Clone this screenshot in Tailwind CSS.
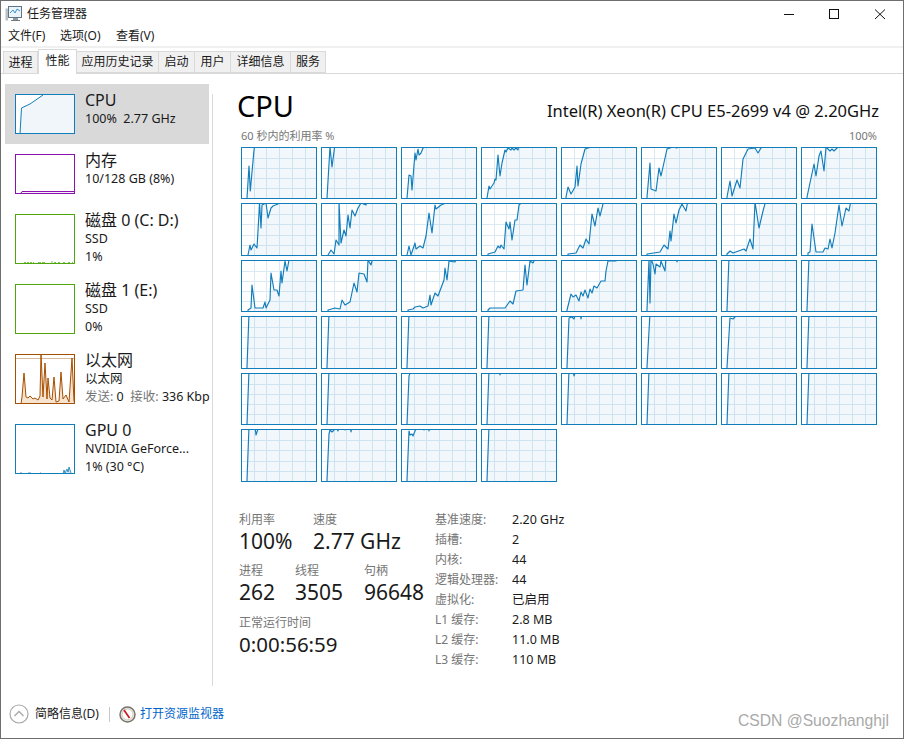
<!DOCTYPE html>
<html lang="zh">
<head>
<meta charset="utf-8">
<title>任务管理器</title>
<script src="https://cdn.jsdelivr.net/npm/@tailwindcss/browser@4"></script>
</head>
<body class="bg-white">
<svg class="hidden"><defs>
<g id="g1" fill="none" stroke="#d9eaf4" stroke-width="1"><path d="M13.5 0V60M25.5 0V60M38.5 0V60M51.5 0V60M64.5 0V60M0 11.5H75M0 21.5H75M0 31.5H75M0 41.5H75"/></g>
<g id="g2" fill="none" stroke="#d9eaf4" stroke-width="1"><path d="M13.5 0V60M25.5 0V60M38.5 0V60M51.5 0V60M64.5 0V60M0 11.5H75M0 21.5H75M0 32.5H75M0 42.5H75"/></g>
</defs></svg>
<div class="w-[904px] h-[739px] flex flex-col overflow-hidden border border-[#6e6e6e] bg-white text-[12px] text-[#1a1a1a] font-['Noto_Sans','Noto_Sans_CJK_SC',sans-serif]">

  <!-- title bar -->
  <div class="h-[25px] flex items-center shrink-0">
    <svg class="ml-[4px] w-[18px] h-[18px]" viewBox="0 0 18 18"><rect x="0.5" y="3.5" width="2.5" height="12" fill="#b9c0c6"/><rect x="3.5" y="1.5" width="13" height="11" fill="#eaf3fa" stroke="#5f7485"/><path d="M5 8 L8 5 L10 8 L12 4 L15 6" fill="none" stroke="#3f93c9"/><path d="M8 13h5v2H8z" fill="#8c979f"/><path d="M6 15.5h9" stroke="#6d7880"/></svg>
    <span class="ml-[4px] text-[12px]">任务管理器</span>
    <div class="ml-auto flex items-center">
      <svg class="w-[12px] h-[12px]" viewBox="0 0 12 12"><path d="M1 6.5H11" stroke="#111"/></svg>
      <svg class="ml-[33px] w-[12px] h-[12px]" viewBox="0 0 12 12"><rect x="1.5" y="1.5" width="9" height="9" fill="none" stroke="#111"/></svg>
      <svg class="ml-[34px] mr-[17px] w-[12px] h-[12px]" viewBox="0 0 12 12"><path d="M1 1.5L11 11M11 1.5L1 11" stroke="#111" stroke-width="1"/></svg>
    </div>
  </div>

  <!-- menu -->
  <div class="h-[20px] flex items-center shrink-0 pl-[7px] text-[12px]">
    <span class="w-[52px]">文件(F)</span><span class="w-[56px]">选项(O)</span><span>查看(V)</span>
  </div>
  <div class="h-[2px] bg-[#f0f0f0] shrink-0"></div>

  <!-- tabs -->
  <div class="h-[26px] flex items-end shrink-0 pl-[2px] border-b border-[#d9d9d9]">
    <div class="w-[35px] h-[22px] flex items-center justify-center bg-[#f0f0f0] border border-b-0 border-[#d9d9d9]">进程</div>
    <div class="w-[39px] h-[25px] flex items-start pt-[2px] justify-center bg-white border border-b-0 border-[#d9d9d9] -mb-px relative">性能</div>
    <div class="w-[82px] h-[22px] flex items-center justify-center bg-[#f0f0f0] border-y border-r border-[#d9d9d9]">应用历史记录</div>
    <div class="w-[36px] h-[22px] flex items-center justify-center bg-[#f0f0f0] border-y border-r border-[#d9d9d9]">启动</div>
    <div class="w-[36px] h-[22px] flex items-center justify-center bg-[#f0f0f0] border-y border-r border-[#d9d9d9]">用户</div>
    <div class="w-[60px] h-[22px] flex items-center justify-center bg-[#f0f0f0] border-y border-r border-[#d9d9d9]">详细信息</div>
    <div class="w-[35px] h-[22px] flex items-center justify-center bg-[#f0f0f0] border-y border-r border-[#d9d9d9]">服务</div>
  </div>

  <!-- body -->
  <div class="flex-1 flex min-h-0">
    <!-- sidebar -->
    <div class="w-[211px] shrink-0 pl-[4px] pt-[10px] overflow-hidden">
      <div class="w-[204px] h-[60px] bg-[#d9d9d9] flex pl-[10px] pt-[10px] gap-[10px]">
        <svg class="shrink-0 w-[60px] h-[40px] outline-1 -outline-offset-1 outline-[#117dbb] bg-white" viewBox="0 0 60 40"><path d="M5 40L6.500 14L15 10L28 1H60V40Z" fill="#f1f6fa"/><path d="M5 40L6.500 14L15 10L28 1" fill="none" stroke="#117dbb"/></svg>
        <div class="-mt-[4px] whitespace-nowrap">
          <div class="text-[16px] leading-[20px]">CPU</div>
          <div class="text-[12.500px] leading-[18px]">100%&nbsp; 2.77 GHz</div>
        </div>
      </div>
      <div class="w-[204px] h-[60px] flex pl-[10px] pt-[10px] gap-[10px]">
        <svg class="shrink-0 w-[60px] h-[40px] outline-1 -outline-offset-1 outline-[#8b12ae] bg-white" viewBox="0 0 60 40"><path d="M6 40L7 37H60V40Z" fill="#f4f2f4"/><path d="M6 39L7 37.500H60" fill="none" stroke="#8b12ae"/></svg>
        <div class="-mt-[4px] whitespace-nowrap">
          <div class="text-[16px] leading-[20px]">内存</div>
          <div class="text-[12.500px] leading-[18px]">10/128 GB (8%)</div>
        </div>
      </div>
      <div class="w-[204px] h-[70px] flex pl-[10px] pt-[10px] gap-[10px]">
        <svg class="shrink-0 w-[60px] h-[50px] outline-1 -outline-offset-1 outline-[#4da60c] bg-white" viewBox="0 0 60 50"><path d="M9 48.500h2M12 48.500h2M15 48.500h2M18 48.500h1M23 48.500h3M27 48.500h3M36 48h2M39 48.500h2M43 48.500h2M48 48.500h2M53 48.500h2M57 48.500h1" stroke="#4da60c" opacity=".7"/></svg>
        <div class="-mt-[4px] whitespace-nowrap">
          <div class="text-[16px] leading-[20px]">磁盘 0 (C: D:)</div>
          <div class="text-[12.500px] leading-[18px]">SSD</div>
          <div class="text-[12.500px] leading-[18px]">1%</div>
        </div>
      </div>
      <div class="w-[204px] h-[70px] flex pl-[10px] pt-[10px] gap-[10px]">
        <svg class="shrink-0 w-[60px] h-[50px] outline-1 -outline-offset-1 outline-[#4da60c] bg-white" viewBox="0 0 60 50"></svg>
        <div class="-mt-[4px] whitespace-nowrap">
          <div class="text-[16px] leading-[20px]">磁盘 1 (E:)</div>
          <div class="text-[12.500px] leading-[18px]">SSD</div>
          <div class="text-[12.500px] leading-[18px]">0%</div>
        </div>
      </div>
      <div class="w-[204px] h-[70px] flex pl-[10px] pt-[10px] gap-[10px]">
        <svg class="shrink-0 w-[60px] h-[50px] outline-1 -outline-offset-1 outline-[#a74f01] bg-white" viewBox="0 0 60 50"><path d="M0 4.500H60" stroke="#d9b99c"/><path d="M6 50L7 43L9 19L11 43L13 44L15 42L18 45L20 44L23 46L25 42L26 0L28 43L30 9L32 45L33 24L35 44L37 46L39 23L41 48L44 47L46 18L48 45L51 41L54 48L57 4L59 47L60 50Z" fill="#f6e3d0" stroke="#a74f01"/></svg>
        <div class="-mt-[4px] whitespace-nowrap">
          <div class="text-[16px] leading-[20px]">以太网</div>
          <div class="text-[12.500px] leading-[18px]">以太网</div>
          <div class="text-[12.500px] leading-[18px]"><span class="text-[#767676]">发送:</span> 0&nbsp; <span class="text-[#767676]">接收:</span> 336 Kbp</div>
        </div>
      </div>
      <div class="w-[204px] h-[70px] flex pl-[10px] pt-[10px] gap-[10px]">
        <svg class="shrink-0 w-[60px] h-[50px] outline-1 -outline-offset-1 outline-[#117dbb] bg-white" viewBox="0 0 60 50"><path d="M5 49h2M13 49h3M25 49h1M48 50L49 46L50 49L52 45L53 48L54 43L56 49L57 50Z" fill="#cfe3f0" stroke="#117dbb" stroke-width=".8"/></svg>
        <div class="-mt-[4px] whitespace-nowrap">
          <div class="text-[16px] leading-[20px]">GPU 0</div>
          <div class="text-[12.500px] leading-[18px]">NVIDIA GeForce...</div>
          <div class="text-[12.500px] leading-[18px]">1% (30 °C)</div>
        </div>
      </div>
    </div>

    <!-- divider -->
    <div class="w-px h-[592px] mt-[20px] bg-[#d9d9d9] shrink-0"></div>

    <!-- main panel -->
    <div class="flex-1 pl-[25px] pt-[14px] min-w-0">
      <div class="h-[36px] w-[641px] flex items-end justify-between">
        <div class="-ml-[1px] text-[29px] leading-[36px] text-black">CPU</div>
        <div class="text-[16.500px] leading-[24px] mb-[1px] text-[#111] whitespace-nowrap">Intel(R) Xeon(R) CPU E5-2699 v4 @ 2.20GHz</div>
      </div>
      <div class="w-[636px] ml-[3px] mt-[6px] h-[13px] flex justify-between items-center text-[11px] text-[#767676]"><span>60 秒内的利用率 %</span><span>100%</span></div>

      <div class="ml-[3px] mt-[4px] grid grid-cols-[repeat(8,76px)] grid-rows-[52px_53px_52px_53px_52px_53px] gap-[4px] w-[636px]">
<!-- row 1 -->
<svg class="size-full outline-1 -outline-offset-1 outline-[#117dbb] fill-[#117dbb]/6 stroke-[#117dbb] [stroke-width:1.15] [stroke-linejoin:round]"><use href="#g1"/><polygon points="6,60 6,51 8,19 9.300,44 13,3 14,-3 80,-3 80,60"/></svg>
<svg class="size-full outline-1 -outline-offset-1 outline-[#117dbb] fill-[#117dbb]/6 stroke-[#117dbb] [stroke-width:1.15] [stroke-linejoin:round]"><use href="#g1"/><polygon points="6,60 6,51 9,0 11,20 14,-3 80,-3 80,60"/></svg>
<svg class="size-full outline-1 -outline-offset-1 outline-[#117dbb] fill-[#117dbb]/6 stroke-[#117dbb] [stroke-width:1.15] [stroke-linejoin:round]"><use href="#g1"/><polygon points="6,60 6,51 8,28 10,29 11,43 14,6 15,13 17,2 18,8 20,6 22,1 25,0 27,-3 80,-3 80,60"/></svg>
<svg class="size-full outline-1 -outline-offset-1 outline-[#117dbb] fill-[#117dbb]/6 stroke-[#117dbb] [stroke-width:1.15] [stroke-linejoin:round]"><use href="#g1"/><polygon points="6,60 6,51 8,39 9,42 13,36 14,32 15,33 17,8 19,29 21,16 24,3 25,5 27,1 30,3 31,1 33,3 35,1 37,3 38,-3 80,-3 80,60"/></svg>
<svg class="size-full outline-1 -outline-offset-1 outline-[#117dbb] fill-[#117dbb]/6 stroke-[#117dbb] [stroke-width:1.15] [stroke-linejoin:round]"><use href="#g1"/><polygon points="5,60 5,50 7,40 10,47 14,40 16,19 17,39 20,17 24,2 27,1 31,0 33,-3 80,-3 80,60"/></svg>
<svg class="size-full outline-1 -outline-offset-1 outline-[#117dbb] fill-[#117dbb]/6 stroke-[#117dbb] [stroke-width:1.15] [stroke-linejoin:round]"><use href="#g1"/><polygon points="6,60 6,50 9,16 10,42 15,44 18,21 20,29 26,2 32,0 36,1 38,-3 80,-3 80,60"/></svg>
<svg class="size-full outline-1 -outline-offset-1 outline-[#117dbb] fill-[#117dbb]/6 stroke-[#117dbb] [stroke-width:1.15] [stroke-linejoin:round]"><use href="#g1"/><polygon points="6,60 6,50 9,34 11,49 16,33 19,41 22,12 27,2 34,1 37,6 40,1 41,0 43,-3 80,-3 80,60"/></svg>
<svg class="size-full outline-1 -outline-offset-1 outline-[#117dbb] fill-[#117dbb]/6 stroke-[#117dbb] [stroke-width:1.15] [stroke-linejoin:round]"><use href="#g1"/><polygon points="6,60 6,50 13,17 15,29 18,9 20,4 23,24 25,0 29,4 31,2 33,4 37,0 39,-3 80,-3 80,60"/></svg>
<!-- row 2 -->
<svg class="size-full outline-1 -outline-offset-1 outline-[#117dbb] fill-[#117dbb]/6 stroke-[#117dbb] [stroke-width:1.15] [stroke-linejoin:round]"><use href="#g2"/><polygon points="7,60 7,52 9,42 10,47 13,41 16,45 18,10 18.500,-1 20,25 21,2 25,0 27,15 30,5 32,3 37,1 38,-3 80,-3 80,60"/></svg>
<svg class="size-full outline-1 -outline-offset-1 outline-[#117dbb] fill-[#117dbb]/6 stroke-[#117dbb] [stroke-width:1.15] [stroke-linejoin:round]"><use href="#g2"/><polygon points="7,60 7,52 10,47 13,51 15,37 18,42 18,-1 20,40 23,27 25,33 27,12 29,25 31,7 34,13 37,5 40,0 45,2 46,-3 80,-3 80,60"/></svg>
<svg class="size-full outline-1 -outline-offset-1 outline-[#117dbb] fill-[#117dbb]/6 stroke-[#117dbb] [stroke-width:1.15] [stroke-linejoin:round]"><use href="#g2"/><polygon points="6,60 6,52 8,43 10,52 14,40 15,46 19,43 22,45 25,33 28,10 31,30 34,2 35,6 40,2 45,0 47,-3 80,-3 80,60"/></svg>
<svg class="size-full outline-1 -outline-offset-1 outline-[#117dbb] fill-[#117dbb]/6 stroke-[#117dbb] [stroke-width:1.15] [stroke-linejoin:round]"><use href="#g2"/><polygon points="7,60 7,51 14,49 17,43 19,45 20,42 23,46 25,19 28,26 29,19 31,37 34,17 36,17 38,2 40,0 42,-3 80,-3 80,60"/></svg>
<svg class="size-full outline-1 -outline-offset-1 outline-[#117dbb] fill-[#117dbb]/6 stroke-[#117dbb] [stroke-width:1.15] [stroke-linejoin:round]"><use href="#g2"/><polygon points="7,60 7,51 15,50 19,42 22,45 25,36 28,41 31,11 34,23 37,5 39,13 43,-3 80,-3 80,60"/></svg>
<svg class="size-full outline-1 -outline-offset-1 outline-[#117dbb] fill-[#117dbb]/6 stroke-[#117dbb] [stroke-width:1.15] [stroke-linejoin:round]"><use href="#g2"/><polygon points="6,60 6,51 19,49 23,42 27,46 29,28 30,38 33,11 35,20 38,7 41,1 45,8 47,-3 80,-3 80,60"/></svg>
<svg class="size-full outline-1 -outline-offset-1 outline-[#117dbb] fill-[#117dbb]/6 stroke-[#117dbb] [stroke-width:1.15] [stroke-linejoin:round]"><use href="#g2"/><polygon points="6,60 6,51 9,48 12,50 23,46 25,48 29,36 32,46 34,-1 38,25 42,8 45,-3 80,-3 80,60"/></svg>
<svg class="size-full outline-1 -outline-offset-1 outline-[#117dbb] fill-[#117dbb]/6 stroke-[#117dbb] [stroke-width:1.15] [stroke-linejoin:round]"><use href="#g2"/><polygon points="7,60 7,50 9,49 11,21 15,49 22,49 24,45 27,46 29,36 31,45 34,30 38,2 41,23 45,5 48,8 50,-3 80,-3 80,60"/></svg>
<!-- row 3 -->
<svg class="size-full outline-1 -outline-offset-1 outline-[#117dbb] fill-[#117dbb]/6 stroke-[#117dbb] [stroke-width:1.15] [stroke-linejoin:round]"><use href="#g1"/><polygon points="7,60 7,50 10,48 11,25 14,48 22,48 24,42 25,48 29,40 30,13 33,30 36,30 38,36 40,11 41,23 44,1 46,11 48,0 52,0 53,-3 80,-3 80,60"/></svg>
<svg class="size-full outline-1 -outline-offset-1 outline-[#117dbb] fill-[#117dbb]/6 stroke-[#117dbb] [stroke-width:1.15] [stroke-linejoin:round]"><use href="#g1"/><polygon points="7,60 7,50 14,48 19,49 21,40 24,45 29,42 33,23 36,32 38,13 43,14 46,22 47,0 50,5 52,-3 80,-3 80,60"/></svg>
<svg class="size-full outline-1 -outline-offset-1 outline-[#117dbb] fill-[#117dbb]/6 stroke-[#117dbb] [stroke-width:1.15] [stroke-linejoin:round]"><use href="#g1"/><polygon points="7,60 7,50 12,49 14,47 19,46 22,48 27,46 29,35 30,45 34,33 37,36 43,20 44,8 46,20 48,1 54,2 56,-3 80,-3 80,60"/></svg>
<svg class="size-full outline-1 -outline-offset-1 outline-[#117dbb] fill-[#117dbb]/6 stroke-[#117dbb] [stroke-width:1.15] [stroke-linejoin:round]"><use href="#g1"/><polygon points="7,60 7,50 9,48 16,48 24,48 29,41 32,44 35,31 42,30 44,5 46,25 49,1 52,3 55,-3 80,-3 80,60"/></svg>
<svg class="size-full outline-1 -outline-offset-1 outline-[#117dbb] fill-[#117dbb]/6 stroke-[#117dbb] [stroke-width:1.15] [stroke-linejoin:round]"><use href="#g1"/><polygon points="6,60 6,50 10,34 12,37 15,35 18,41 20,32 22,36 24,30 27,38 29,29 31,33 33,26 36,28 40,21 44,21 45,11 47,1 55,1 57,-3 80,-3 80,60"/></svg>
<svg class="size-full outline-1 -outline-offset-1 outline-[#117dbb] fill-[#117dbb]/6 stroke-[#117dbb] [stroke-width:1.15] [stroke-linejoin:round]"><use href="#g1"/><polygon points="6,60 6,50 8,-1 9,43 10,-1 12,4 14,14 15,4 19,7 20,1 24,11 25,-3 35,-3 36,2 37,-3 80,-3 80,60"/></svg>
<svg class="size-full outline-1 -outline-offset-1 outline-[#117dbb] fill-[#117dbb]/6 stroke-[#117dbb] [stroke-width:1.15] [stroke-linejoin:round]"><use href="#g1"/><polygon points="6,60 6,50 8,-3 80,-3 80,60"/></svg>
<svg class="size-full outline-1 -outline-offset-1 outline-[#117dbb] fill-[#117dbb]/6 stroke-[#117dbb] [stroke-width:1.15] [stroke-linejoin:round]"><use href="#g1"/><polygon points="6,60 6,50 8,-3 80,-3 80,60"/></svg>
<!-- row 4 -->
<svg class="size-full outline-1 -outline-offset-1 outline-[#117dbb] fill-[#117dbb]/6 stroke-[#117dbb] [stroke-width:1.15] [stroke-linejoin:round]"><use href="#g2"/><polygon points="6,60 6,51 8,-3 80,-3 80,60"/></svg>
<svg class="size-full outline-1 -outline-offset-1 outline-[#117dbb] fill-[#117dbb]/6 stroke-[#117dbb] [stroke-width:1.15] [stroke-linejoin:round]"><use href="#g2"/><polygon points="6,60 6,51 8,-3 80,-3 80,60"/></svg>
<svg class="size-full outline-1 -outline-offset-1 outline-[#117dbb] fill-[#117dbb]/6 stroke-[#117dbb] [stroke-width:1.15] [stroke-linejoin:round]"><use href="#g2"/><polygon points="6,60 6,51 8,-3 80,-3 80,60"/></svg>
<svg class="size-full outline-1 -outline-offset-1 outline-[#117dbb] fill-[#117dbb]/6 stroke-[#117dbb] [stroke-width:1.15] [stroke-linejoin:round]"><use href="#g2"/><polygon points="6,60 6,51 8,-3 80,-3 80,60"/></svg>
<svg class="size-full outline-1 -outline-offset-1 outline-[#117dbb] fill-[#117dbb]/6 stroke-[#117dbb] [stroke-width:1.15] [stroke-linejoin:round]"><use href="#g2"/><polygon points="6,60 6,51 8,2 11,1 13,3 15,-3 19,-3 20,3 21,-3 80,-3 80,60"/></svg>
<svg class="size-full outline-1 -outline-offset-1 outline-[#117dbb] fill-[#117dbb]/6 stroke-[#117dbb] [stroke-width:1.15] [stroke-linejoin:round]"><use href="#g2"/><polygon points="6,60 6,51 9,-3 80,-3 80,60"/></svg>
<svg class="size-full outline-1 -outline-offset-1 outline-[#117dbb] fill-[#117dbb]/6 stroke-[#117dbb] [stroke-width:1.15] [stroke-linejoin:round]"><use href="#g2"/><polygon points="6,60 6,51 9,2 12,3 14,1 16,-3 80,-3 80,60"/></svg>
<svg class="size-full outline-1 -outline-offset-1 outline-[#117dbb] fill-[#117dbb]/6 stroke-[#117dbb] [stroke-width:1.15] [stroke-linejoin:round]"><use href="#g2"/><polygon points="6,60 6,51 8,-3 80,-3 80,60"/></svg>
<!-- row 5 -->
<svg class="size-full outline-1 -outline-offset-1 outline-[#117dbb] fill-[#117dbb]/6 stroke-[#117dbb] [stroke-width:1.15] [stroke-linejoin:round]"><use href="#g1"/><polygon points="6,60 6,51 8,-3 80,-3 80,60"/></svg>
<svg class="size-full outline-1 -outline-offset-1 outline-[#117dbb] fill-[#117dbb]/6 stroke-[#117dbb] [stroke-width:1.15] [stroke-linejoin:round]"><use href="#g1"/><polygon points="6,60 6,51 8,-3 80,-3 80,60"/></svg>
<svg class="size-full outline-1 -outline-offset-1 outline-[#117dbb] fill-[#117dbb]/6 stroke-[#117dbb] [stroke-width:1.15] [stroke-linejoin:round]"><use href="#g1"/><polygon points="6,60 6,51 8,3 10,-3 80,-3 80,60"/></svg>
<svg class="size-full outline-1 -outline-offset-1 outline-[#117dbb] fill-[#117dbb]/6 stroke-[#117dbb] [stroke-width:1.15] [stroke-linejoin:round]"><use href="#g1"/><polygon points="6,60 6,51 8,-3 18,-3 19,2 20,-3 80,-3 80,60"/></svg>
<svg class="size-full outline-1 -outline-offset-1 outline-[#117dbb] fill-[#117dbb]/6 stroke-[#117dbb] [stroke-width:1.15] [stroke-linejoin:round]"><use href="#g1"/><polygon points="6,60 6,51 8,-3 12,-3 13,3 15,-3 80,-3 80,60"/></svg>
<svg class="size-full outline-1 -outline-offset-1 outline-[#117dbb] fill-[#117dbb]/6 stroke-[#117dbb] [stroke-width:1.15] [stroke-linejoin:round]"><use href="#g1"/><polygon points="6,60 6,51 8,-3 80,-3 80,60"/></svg>
<svg class="size-full outline-1 -outline-offset-1 outline-[#117dbb] fill-[#117dbb]/6 stroke-[#117dbb] [stroke-width:1.15] [stroke-linejoin:round]"><use href="#g1"/><polygon points="6,60 6,51 8,-3 80,-3 80,60"/></svg>
<svg class="size-full outline-1 -outline-offset-1 outline-[#117dbb] fill-[#117dbb]/6 stroke-[#117dbb] [stroke-width:1.15] [stroke-linejoin:round]"><use href="#g1"/><polygon points="6,60 6,51 8,-3 80,-3 80,60"/></svg>
<!-- row 6 -->
<svg class="size-full outline-1 -outline-offset-1 outline-[#117dbb] fill-[#117dbb]/6 stroke-[#117dbb] [stroke-width:1.15] [stroke-linejoin:round]"><use href="#g2"/><polygon points="6,60 6,51 8,-3 14,-3 15,6 18,-3 80,-3 80,60"/></svg>
<svg class="size-full outline-1 -outline-offset-1 outline-[#117dbb] fill-[#117dbb]/6 stroke-[#117dbb] [stroke-width:1.15] [stroke-linejoin:round]"><use href="#g2"/><polygon points="6,60 6,51 8,5 9,1 11,3 13,1 15,-3 17,2 18,-3 23,-3 24,1 25,-3 29,-3 30,3 31,-3 80,-3 80,60"/></svg>
<svg class="size-full outline-1 -outline-offset-1 outline-[#117dbb] fill-[#117dbb]/6 stroke-[#117dbb] [stroke-width:1.15] [stroke-linejoin:round]"><use href="#g2"/><polygon points="6,60 6,51 8,2 9,6 11,5 12,7 14,2 16,-3 22,-3 23,1 24,-3 27,-3 28,2 29,-3 80,-3 80,60"/></svg>
<svg class="size-full outline-1 -outline-offset-1 outline-[#117dbb] fill-[#117dbb]/6 stroke-[#117dbb] [stroke-width:1.15] [stroke-linejoin:round]"><use href="#g2"/><polygon points="6,60 6,51 8,-3 80,-3 80,60"/></svg>
      </div>

      <!-- stats -->
      <div class="mt-[28px] ml-[1px] flex">
        <div class="w-[196px] shrink-0">
          <div class="flex">
            <div class="w-[74px]">
              <div class="h-[20px] leading-[20px] text-[#767676]">利用率</div>
              <div class="h-[26px] leading-[26px] text-[21px] -mt-[2px]">100%</div>
            </div>
            <div>
              <div class="h-[20px] leading-[20px] text-[#767676]">速度</div>
              <div class="h-[26px] leading-[26px] text-[21px] -mt-[2px] whitespace-nowrap">2.77 GHz</div>
            </div>
          </div>
          <div class="flex mt-[7px]">
            <div class="w-[56px]">
              <div class="h-[20px] leading-[20px] text-[#767676]">进程</div>
              <div class="h-[26px] leading-[26px] text-[21px] -mt-[2px]">262</div>
            </div>
            <div class="w-[69px]">
              <div class="h-[20px] leading-[20px] text-[#767676]">线程</div>
              <div class="h-[26px] leading-[26px] text-[21px] -mt-[2px]">3505</div>
            </div>
            <div>
              <div class="h-[20px] leading-[20px] text-[#767676]">句柄</div>
              <div class="h-[26px] leading-[26px] text-[21px] -mt-[2px]">96648</div>
            </div>
          </div>
          <div class="mt-[8px]">
            <div class="h-[20px] leading-[20px] text-[#767676]">正常运行时间</div>
            <div class="h-[26px] leading-[26px] text-[20.500px] -mt-[2px]">0:00:56:59</div>
          </div>
        </div>
        <div class="grid grid-cols-[77px_auto] auto-rows-[20px] items-center text-[12.500px]">
          <div class="text-[12px] text-[#767676]">基准速度:</div><div>2.20 GHz</div>
          <div class="text-[12px] text-[#767676]">插槽:</div><div>2</div>
          <div class="text-[12px] text-[#767676]">内核:</div><div>44</div>
          <div class="text-[12px] text-[#767676] whitespace-nowrap">逻辑处理器:</div><div>44</div>
          <div class="text-[12px] text-[#767676]">虚拟化:</div><div>已启用</div>
          <div class="text-[12px] text-[#767676]">L1 缓存:</div><div>2.8 MB</div>
          <div class="text-[12px] text-[#767676]">L2 缓存:</div><div>11.0 MB</div>
          <div class="text-[12px] text-[#767676]">L3 缓存:</div><div>110 MB</div>
        </div>
      </div>
    </div>
  </div>

  <!-- footer -->
  <div class="h-[43px] shrink-0 flex items-center pl-[8px] pb-[5px] relative">
    <svg class="w-[20px] h-[20px]" viewBox="0 0 20 20"><circle cx="10" cy="10" r="9" fill="#fff" stroke="#a8a8a8" stroke-width="1.200"/><path d="M5.500 12L10 7.500L14.500 12" fill="none" stroke="#a8a8a8" stroke-width="1.300"/></svg>
    <span class="ml-[6px] whitespace-nowrap">简略信息(D)</span>
    <span class="ml-[10px] w-px h-[15px] bg-[#c8c8c8]"></span>
    <svg class="ml-[9px] w-[17px] h-[17px]" viewBox="0 0 17 17"><circle cx="8.500" cy="8.500" r="7.500" fill="#f3f1ea" stroke="#77746c" stroke-width="1.500"/><circle cx="8.500" cy="8.500" r="5.500" fill="#fff" stroke="#c8c4b8"/><path d="M5 4L10.500 12" stroke="#c8201c" stroke-width="1.800"/></svg>
    <span class="ml-[4px] text-[#0066cc] whitespace-nowrap">打开资源监视器</span>
    <span class="absolute right-[14px] bottom-[8px] text-[15.700px] leading-[18px] text-[#a9a9a9] font-['Liberation_Sans',sans-serif]">CSDN @Suozhanghjl</span>
  </div>
</div>
</body>
</html>
